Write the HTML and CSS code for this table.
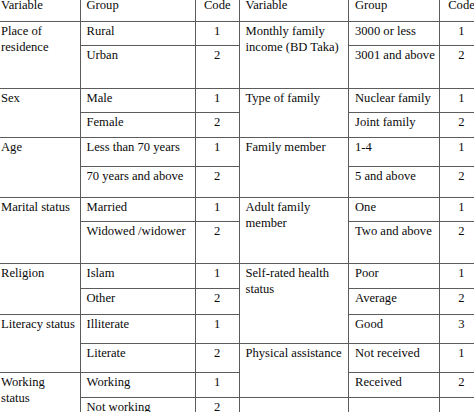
FILE: index.html
```
<!DOCTYPE html>
<html lang="en">
<head>
<meta charset="utf-8">
<title>Variables and codes</title>
<link rel="stylesheet" href="styles.css">
</head>
<body>
<table class="codes">
  <colgroup>
    <col class="c-var1">
    <col class="c-grp1">
    <col class="c-code1">
    <col class="c-var2">
    <col class="c-grp2">
    <col class="c-code2">
  </colgroup>
  <thead>
    <tr class="r-head">
      <th>Variable</th><th>Group</th><th class="code">Code</th>
      <th>Variable</th><th>Group</th><th class="code">Code</th>
    </tr>
  </thead>
  <tbody>
    <tr class="r24">
      <td rowspan="2">Place of<br>residence</td><td>Rural</td><td class="code">1</td>
      <td rowspan="2">Monthly family<br>income (BD Taka)</td><td>3000 or less</td><td class="code">1</td>
    </tr>
    <tr class="r43">
      <td>Urban</td><td class="code">2</td>
      <td>3001 and above</td><td class="code">2</td>
    </tr>
    <tr class="r24">
      <td rowspan="2">Sex</td><td>Male</td><td class="code">1</td>
      <td rowspan="2">Type of family</td><td>Nuclear family</td><td class="code">1</td>
    </tr>
    <tr class="r25">
      <td>Female</td><td class="code">2</td>
      <td>Joint family</td><td class="code">2</td>
    </tr>
    <tr class="r29">
      <td rowspan="2">Age</td><td>Less than 70 years</td><td class="code">1</td>
      <td rowspan="2">Family member</td><td>1-4</td><td class="code">1</td>
    </tr>
    <tr class="r31">
      <td>70 years and above</td><td class="code">2</td>
      <td>5 and above</td><td class="code">2</td>
    </tr>
    <tr class="r24">
      <td rowspan="2">Marital status</td><td>Married</td><td class="code">1</td>
      <td rowspan="2">Adult family<br>member</td><td>One</td><td class="code">1</td>
    </tr>
    <tr class="r42">
      <td>Widowed /widower</td><td class="code">2</td>
      <td>Two and above</td><td class="code">2</td>
    </tr>
    <tr class="r25">
      <td rowspan="2">Religion</td><td>Islam</td><td class="code">1</td>
      <td rowspan="3">Self-rated health<br>status</td><td>Poor</td><td class="code">1</td>
    </tr>
    <tr class="r26">
      <td>Other</td><td class="code">2</td>
      <td>Average</td><td class="code">2</td>
    </tr>
    <tr class="r29">
      <td rowspan="2">Literacy status</td><td>Illiterate</td><td class="code">1</td>
      <td>Good</td><td class="code">3</td>
    </tr>
    <tr class="r29">
      <td>Literate</td><td class="code">2</td>
      <td rowspan="2">Physical assistance</td><td>Not received</td><td class="code">1</td>
    </tr>
    <tr class="r25">
      <td rowspan="2">Working<br>status</td><td>Working</td><td class="code">1</td>
      <td>Received</td><td class="code">2</td>
    </tr>
    <tr class="r25">
      <td>Not working</td><td class="code">2</td>
      <td></td><td></td><td class="code"></td>
    </tr>
  </tbody>
</table>
</body>
</html>
```

FILE: styles.css
```
html, body {
  margin: 0;
  padding: 0;
  background: #ffffff;
  overflow: hidden;
}

.codes {
  border-collapse: collapse;
  table-layout: fixed;
  width: 489px;
  margin: -5px 0 0 -6px;
  font-family: "Liberation Serif", "Times New Roman", serif;
  font-size: 12.6px;
  line-height: 16px;
  color: #0a0a0a;
}

.c-var1 { width: 85.5px; }
.c-grp1 { width: 115.5px; }
.c-code1 { width: 43.5px; }
.c-var2 { width: 109.5px; }
.c-grp2 { width: 91px; }
.c-code2 { width: 44px; }

.codes th,
.codes td {
  border: 1px solid #5c5c5c;
  padding: 1px 3px 0 6px;
  vertical-align: top;
  text-align: left;
  font-weight: normal;
  white-space: nowrap;
  overflow: hidden;
}

.codes .code {
  text-align: center;
  padding-left: 0;
  padding-right: 0;
}

.codes th {
  vertical-align: bottom;
  padding-bottom: 8px;
}

.r-head { height: 26px; }
.r24 { height: 24px; }
.r25 { height: 25px; }
.r26 { height: 26px; }
.r29 { height: 29px; }
.r31 { height: 31px; }
.r42 { height: 42px; }
.r43 { height: 43px; }
```
